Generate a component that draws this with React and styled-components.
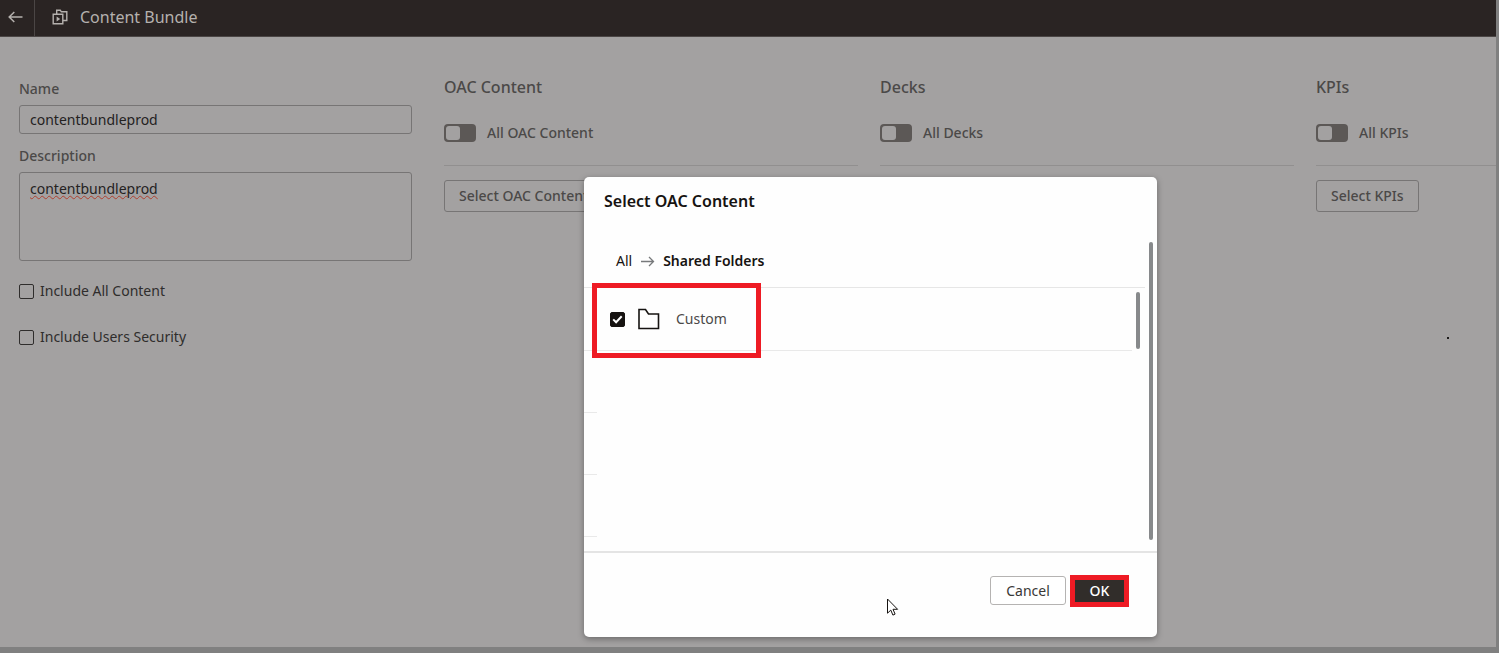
import React, { useState } from "react";
import styled, { createGlobalStyle, css } from "styled-components";

const GlobalStyle = createGlobalStyle`
  * {
    box-sizing: border-box;
  }

  body {
    margin: 0;
    background: #808080;
    font-family: "Noto Sans", "Open Sans", sans-serif;
    font-size: 14px;
    line-height: 20px;
  }

  input,
  textarea,
  button {
    margin: 0;
    font: inherit;
  }
`;

const Page = styled.div`
  position: relative;
  min-height: 100vh;
  padding: 0 3px 6px 0;
  display: flex;
  flex-direction: column;
  overflow: hidden;
`;

const Header = styled.header`
  height: 37px;
  flex: none;
  display: flex;
  align-items: stretch;
  background: #2a2423;
  border-bottom: 1px solid #4b4645;
  color: #b5b1ae;
`;

const BackButton = styled.button`
  width: 35px;
  padding: 0 0 2px 8px;
  display: flex;
  align-items: center;
  border: 0;
  border-right: 1px solid #4b4645;
  background: none;
  color: inherit;
`;

const HeaderTitle = styled.h1`
  margin: 0;
  padding: 0 0 2px 17px;
  display: flex;
  align-items: center;
  gap: 12px;
  font-size: 16px;
  font-weight: 400;
`;

const Content = styled.main`
  flex: 1;
  display: flex;
  padding: 40px 0 0 19px;
  overflow: hidden;
  background: #a3a1a1;
  color: #4b4948;
`;

const Form = styled.form`
  flex: none;
  width: 393px;
  margin-right: 32px;
  display: flex;
  flex-direction: column;
`;

const FieldLabel = styled.label`
  height: 28px;
  padding-top: 2px;
  font-weight: 500;
`;

const fieldStyle = css`
  width: 100%;
  padding: 0 10px;
  border: 1px solid #777575;
  border-radius: 3px;
  outline: 0;
  background: transparent;
  color: #242221;
`;

const TextInput = styled.input`
  ${fieldStyle}
  height: 29px;
  margin-bottom: 10px;
`;

const TextArea = styled.textarea`
  ${fieldStyle}
  height: 89px;
  padding-top: 6px;
  margin-bottom: 20px;
  resize: none;
  text-decoration: underline wavy #b0402f 1px;
`;

const CheckLabel = styled.label`
  display: flex;
  align-items: center;
  gap: 6px;
  height: 20px;
  margin-bottom: 26px;
  color: #2f2d2c;
`;

const CheckWrap = styled.span`
  display: grid;
  width: 15px;
  height: 15px;

  > * {
    grid-area: 1 / 1;
  }

  svg {
    place-self: center;
    pointer-events: none;
  }
`;

const CheckInput = styled.input`
  appearance: none;
  width: 15px;
  height: 15px;
  border: 1px solid #2f2d2c;
  border-radius: 2px;

  &:checked {
    background: #161311;
    border-color: #161311;
  }
`;

const Columns = styled.div`
  flex: 1;
  min-width: 0;
  display: flex;
  gap: 22px;
`;

const Column = styled.section`
  flex: 0 0 414px;
`;

const ColumnTitle = styled.h2`
  margin: 0 0 26px;
  font-size: 16px;
  font-weight: 500;
`;

const SwitchLabel = styled.label`
  display: flex;
  align-items: center;
  gap: 11px;
  height: 20px;
  margin-bottom: 22px;
  font-weight: 500;
`;

const SwitchInput = styled.input`
  appearance: none;
  width: 32px;
  height: 18px;
  display: flex;
  padding: 2px;
  border-radius: 4px;
  background: #5c5856;

  &::before {
    content: "";
    width: 14px;
    border-radius: 3px;
    background: #a3a1a1;
  }

  &:checked {
    justify-content: flex-end;
  }
`;

const Divider = styled.hr`
  margin: 0 0 14px;
  border: 0;
  border-top: 1px solid #918f8f;
`;

const SelectButton = styled.button`
  height: 32px;
  padding: 0 14px;
  border: 1px solid #777575;
  border-radius: 3px;
  background: transparent;
  color: #4b4948;
  font-weight: 500;
`;

const Overlay = styled.div`
  position: absolute;
  inset: 0;
  padding: 177px 0 16px 242px;
  display: flex;
  justify-content: center;
  align-items: flex-start;
`;

const Dialog = styled.div`
  width: 573px;
  border-radius: 5px;
  background: #fefefe;
  box-shadow: 0 2px 6px rgba(0, 0, 0, 0.35);
  color: #161311;
`;

const DialogTitle = styled.h2`
  height: 65px;
  margin: 0;
  padding: 14px 20px 0;
  font-size: 16px;
  font-weight: 600;
`;

const DialogBody = styled.div`
  display: flex;
  align-items: flex-start;
  gap: 4px;
  height: 309px;
  padding-right: 4px;
`;

const Browser = styled.div`
  flex: 1;
`;

const ScrollThumb = styled.div`
  width: 4px;
  height: ${(props) => props.$size}px;
  border-radius: 2px;
  background: #87898b;
`;

const Breadcrumb = styled.nav`
  height: 46px;
  padding: 9px 0 0 32px;
  display: flex;
  align-items: flex-start;
  gap: 8px;
  border-bottom: 1px solid #e6e6e6;
  margin-bottom: 1px;

  a {
    color: #161311;
    text-decoration: none;
  }

  svg {
    margin-top: 3px;
  }
`;

const Crumb = styled.span`
  font-weight: 600;
`;

const ListArea = styled.div`
  display: flex;
  align-items: flex-start;
  gap: 4px;
  padding-right: 5px;
`;

const List = styled.ul`
  flex: 1;
  margin: 0;
  padding: 0;
  list-style: none;
`;

const ListItem = styled.li`
  position: relative;
  height: 62px;
  width: ${(props) => (props.$empty ? "13px" : "100%")};
  border-bottom: 1px solid #e9e9e9;
`;

const ItemLabel = styled.label`
  display: flex;
  align-items: center;
  height: 60px;
  padding-left: 26px;
  color: #4b4948;
`;

const ItemIcon = styled.span`
  display: flex;
  margin: 0 16px 0 13px;
  color: #161311;
`;

const Highlight = styled.div`
  position: absolute;
  inset: -6px auto auto 8px;
  width: 169px;
  height: 75px;
  border: 5px solid #ee1b24;
  pointer-events: none;
`;

const ThumbSlot = styled.div`
  padding-top: 3px;
`;

const DialogFooter = styled.footer`
  height: 86px;
  padding: 22px 28px 0;
  display: flex;
  justify-content: flex-end;
  align-items: flex-start;
  gap: 4px;
  border-top: 2px solid #e4e4e4;
`;

const CancelButton = styled.button`
  width: 76px;
  height: 29px;
  margin-top: 1px;
  border: 1px solid #b5b3b2;
  border-radius: 3px;
  background: #fff;
  color: #3a3836;
`;

const OkButton = styled.button`
  width: 59px;
  height: 32px;
  padding: 0;
  border: 5px solid #ee1b24;
  background: #312d2a;
  color: #fff;
  font-weight: 500;
`;

const Pointer = styled.svg`
  position: absolute;
  left: 887px;
  top: 598px;
`;

const Dot = styled.span`
  position: absolute;
  left: 1447px;
  top: 337px;
  width: 2px;
  height: 2px;
  background: #1d1b1a;
`;

const columns = ["OAC Content", "Decks", "KPIs"];

function ArrowLeft() {
  return (
    <svg width="15" height="12" viewBox="0 0 15 12" fill="none" stroke="currentColor" strokeWidth="1.5">
      <path d="M14.5 6H1.2M6.3 1L1.2 6l5.1 5" />
    </svg>
  );
}

function ArrowRight() {
  return (
    <svg width="15" height="14" viewBox="0 0 15 14" fill="none" stroke="#77797b" strokeWidth="1.3">
      <path d="M1 7.5h12.5M9 3l4.5 4.5L9 12" />
    </svg>
  );
}

function BundleIcon() {
  return (
    <svg width="16" height="16" viewBox="0 0 16 16" fill="none" stroke="currentColor" strokeWidth="1.4">
      <path d="M1.2 5.2h9.6v9.6H1.2z" />
      <path d="M4.7 5V1.2h3.6l1 1.6h5.5v8.7h-4" />
      <path d="M4.6 7.6l3.6 2.4-3.6 2.4z" fill="currentColor" stroke="none" />
    </svg>
  );
}

function FolderIcon() {
  return (
    <svg width="22" height="22" viewBox="0 0 22 22" fill="none" stroke="currentColor" strokeWidth="1.6">
      <path d="M1 1.5h6.5L10.5 6H20.5V20.5H1z" />
    </svg>
  );
}

function Checkbox({ checked, onChange }) {
  return (
    <CheckWrap>
      <CheckInput type="checkbox" checked={checked} onChange={(e) => onChange(e.target.checked)} />
      {checked && (
        <svg width="11" height="9" viewBox="0 0 11 9" fill="none" stroke="#fff" strokeWidth="2">
          <path d="M1.2 4.4l2.9 2.9 5.6-6" />
        </svg>
      )}
    </CheckWrap>
  );
}

function App() {
  const [name, setName] = useState("contentbundleprod");
  const [description, setDescription] = useState("contentbundleprod");
  const [allContent, setAllContent] = useState(false);
  const [usersSecurity, setUsersSecurity] = useState(false);
  const [custom, setCustom] = useState(true);

  return (
    <Page>
      <GlobalStyle />
      <Header>
        <BackButton type="button" aria-label="Back">
          <ArrowLeft />
        </BackButton>
        <HeaderTitle>
          <BundleIcon />
          Content Bundle
        </HeaderTitle>
      </Header>
      <Content>
        <Form>
          <FieldLabel htmlFor="name">Name</FieldLabel>
          <TextInput id="name" value={name} onChange={(e) => setName(e.target.value)} />
          <FieldLabel htmlFor="description">Description</FieldLabel>
          <TextArea
            id="description"
            spellCheck={false}
            value={description}
            onChange={(e) => setDescription(e.target.value)}
          />
          <CheckLabel>
            <Checkbox checked={allContent} onChange={setAllContent} />
            Include All Content
          </CheckLabel>
          <CheckLabel>
            <Checkbox checked={usersSecurity} onChange={setUsersSecurity} />
            Include Users Security
          </CheckLabel>
        </Form>
        <Columns>
          {columns.map((title) => (
            <Column key={title}>
              <ColumnTitle>{title}</ColumnTitle>
              <SwitchLabel>
                <SwitchInput type="checkbox" role="switch" />
                All {title}
              </SwitchLabel>
              <Divider />
              <SelectButton type="button">Select {title}</SelectButton>
            </Column>
          ))}
        </Columns>
      </Content>
      <Overlay>
        <Dialog role="dialog" aria-labelledby="dialog-title">
          <DialogTitle id="dialog-title">Select OAC Content</DialogTitle>
          <DialogBody>
            <Browser>
              <Breadcrumb>
                <a href="#all">All</a>
                <ArrowRight />
                <Crumb>Shared Folders</Crumb>
              </Breadcrumb>
              <ListArea>
                <List>
                  <ListItem>
                    <ItemLabel>
                      <Checkbox checked={custom} onChange={setCustom} />
                      <ItemIcon>
                        <FolderIcon />
                      </ItemIcon>
                      Custom
                    </ItemLabel>
                    <Highlight />
                  </ListItem>
                  <ListItem $empty />
                  <ListItem $empty />
                  <ListItem $empty />
                </List>
                <ThumbSlot>
                  <ScrollThumb $size={57} />
                </ThumbSlot>
              </ListArea>
            </Browser>
            <ScrollThumb $size={298} />
          </DialogBody>
          <DialogFooter>
            <CancelButton type="button">Cancel</CancelButton>
            <OkButton type="button">OK</OkButton>
          </DialogFooter>
        </Dialog>
      </Overlay>
      <Dot />
      <Pointer width="12" height="19" viewBox="0 0 12 19" fill="#fff" stroke="#161311">
        <path d="M.5 1v14.2l3.3-3.1 2.1 5 2.2-1-2.1-4.8h4.6z" />
      </Pointer>
    </Page>
  );
}

export default App;
